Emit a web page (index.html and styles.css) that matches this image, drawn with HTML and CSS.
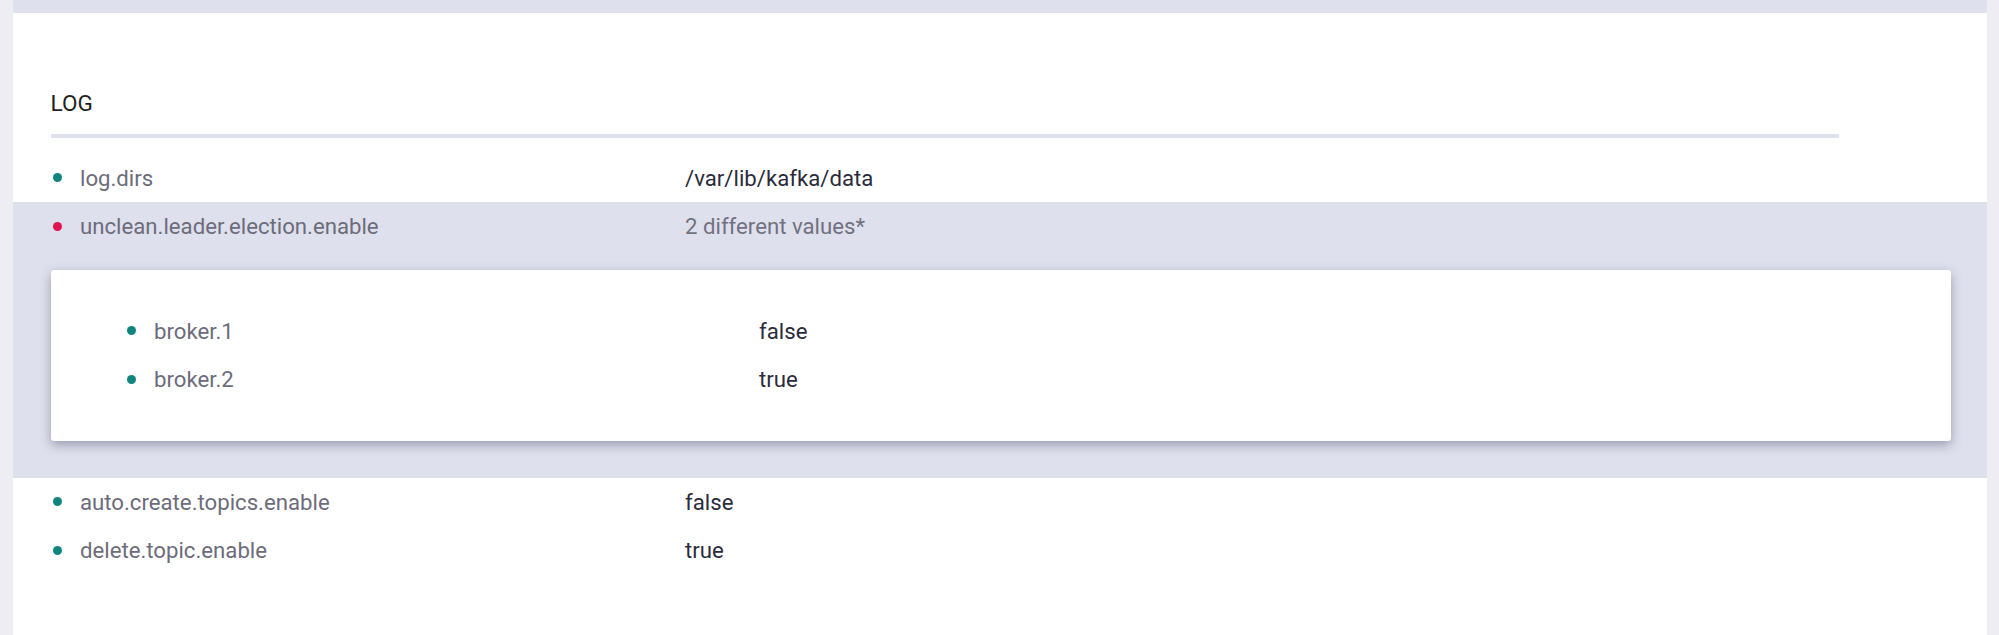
FILE: index.html
```html
<!DOCTYPE html>
<html>
<head>
<meta charset="utf-8">
<link rel="stylesheet" href="styles.css">
</head>
<body>
<div class="panel">
  <div class="top-band"></div>
  <div class="section-title">LOG</div>
  <div class="rows">
    <div class="row">
      <span class="dot ok"></span>
      <span class="key">log.dirs</span>
      <span class="value">/var/lib/kafka/data</span>
    </div>
    <div class="expanded">
      <div class="row">
        <span class="dot bad"></span>
        <span class="key">unclean.leader.election.enable</span>
        <span class="value muted">2 different values*</span>
      </div>
      <div class="card">
        <div class="row">
          <span class="dot ok"></span>
          <span class="key">broker.1</span>
          <span class="value">false</span>
        </div>
        <div class="row">
          <span class="dot ok"></span>
          <span class="key">broker.2</span>
          <span class="value">true</span>
        </div>
      </div>
    </div>
    <div class="row">
      <span class="dot ok"></span>
      <span class="key">auto.create.topics.enable</span>
      <span class="value">false</span>
    </div>
    <div class="row">
      <span class="dot ok"></span>
      <span class="key">delete.topic.enable</span>
      <span class="value">true</span>
    </div>
  </div>
</div>
</body>
</html>
```

FILE: styles.css
```css
html, body {
  margin: 0;
  padding: 0;
}
body {
  background: #ededf3;
  font-family: Roboto, "Liberation Sans", sans-serif;
  font-size: 22.2px;
  height: 635px;
  overflow: hidden;
  padding: 0 12px 0 12.5px;
}
.panel {
  background: #ffffff;
  height: 635px;
}
.top-band {
  height: 12.5px;
  background: #dfe0ed;
}
.section-title {
  margin: 0 148px 0 38px;
  padding-top: 77px;
  padding-bottom: 18px;
  line-height: 26px;
  font-size: 22.5px;
  color: #1f1f24;
  border-bottom: 4px solid #dfe0ed;
}
.rows {
  padding-top: 16px;
}
.row {
  display: flex;
  align-items: center;
  height: 48.5px;
  padding-left: 40px;
}
.dot {
  width: 9px;
  height: 9px;
  border-radius: 50%;
  flex: none;
  margin-right: 18.5px;
}
.dot.ok { background: #10857f; }
.dot.bad { background: #e0144f; }
.key {
  width: 605px;
  flex: none;
  color: #6c6c7b;
}
.value {
  color: #2b2b3b;
}
.value.muted {
  color: #71717f;
}
.expanded {
  background: #dfe0ed;
  padding-bottom: 37px;
}
.card {
  background: #ffffff;
  margin: 19px 36.5px 0 38px;
  border-radius: 3px;
  box-shadow: 0 4px 11px rgba(60, 62, 92, 0.42);
  padding: 37px 0 37px 0;
}
.card .row {
  padding-left: 76px;
}
```
